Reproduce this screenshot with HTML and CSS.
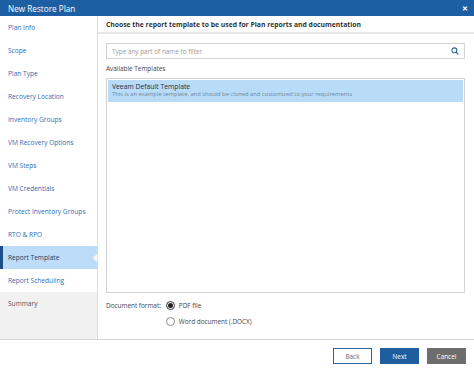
FILE: index.html
```html
<!DOCTYPE html>
<html lang="en">
<head>
<meta charset="UTF-8" />
<title>New Restore Plan</title>
<link rel="stylesheet" href="styles.css">
</head>
<body>
  <div class="dialog">
    <div class="titlebar">
      <span class="title">New Restore Plan</span>
      <span class="close">&#10005;</span>
    </div>
    <div class="main">
      <ul class="steps">
        <li class="step">Plan Info</li>
        <li class="step">Scope</li>
        <li class="step">Plan Type</li>
        <li class="step">Recovery Location</li>
        <li class="step">Inventory Groups</li>
        <li class="step">VM Recovery Options</li>
        <li class="step">VM Steps</li>
        <li class="step">VM Credentials</li>
        <li class="step">Protect Inventory Groups</li>
        <li class="step">RTO &amp; RPO</li>
        <li class="step active">Report Template</li>
        <li class="step">Report Scheduling</li>
        <li class="step pending">Summary</li>
      </ul>
      <div class="content">
        <div class="content-header">Choose the report template to be used for Plan reports and documentation</div>
        <div class="content-body">
          <div class="filter">
            <input type="text" class="filter-input" placeholder="Type any part of name to filter" />
            <svg class="search-icon" width="8" height="8" viewBox="0 0 10 10">
              <circle cx="4.2" cy="4.2" r="3.1" fill="none" stroke="#2a5f96" stroke-width="1.3"/>
              <line x1="6.4" y1="6.4" x2="9.2" y2="9.2" stroke="#2a5f96" stroke-width="1.5"/>
            </svg>
          </div>
          <div class="list-label">Available Templates</div>
          <div class="template-list">
            <div class="template selected">
              <div class="template-name">Veeam Default Template</div>
              <div class="template-desc">This is an example template, and should be cloned and customized to your requirements</div>
            </div>
          </div>
          <div class="format">
            <span class="format-label">Document format:</span>
            <div class="format-options">
              <label class="radio"><span class="radio-dot checked"></span>PDF file</label>
              <label class="radio"><span class="radio-dot"></span>Word document (.DOCX)</label>
            </div>
          </div>
        </div>
      </div>
    </div>
    <div class="footer">
      <button class="btn btn-back">Back</button>
      <button class="btn btn-next">Next</button>
      <button class="btn btn-cancel">Cancel</button>
    </div>
  </div>
</body>
</html>
```

FILE: styles.css
```css
body {
  margin: 0;
  font-family: 'Open Sans', sans-serif;
  background-color: #fff;
}
.dialog {
  width: 474px;
  height: 372px;
  display: flex;
  flex-direction: column;
}
.titlebar {
  height: 16px;
  background-color: #1c5fa3;
  color: #fff;
  display: flex;
  align-items: center;
  justify-content: space-between;
  padding: 0 6px 0 8px;
  font-size: 8.2px;
}
.close {
  font-size: 7px;
  font-weight: 700;
}
.main {
  flex: 1;
  display: flex;
  min-height: 0;
  border-bottom: 1px solid #d6d6d6;
}
.steps {
  list-style: none;
  margin: 0;
  padding: 0;
  width: 97px;
  border-right: 1px solid #dcdcdc;
  display: flex;
  flex-direction: column;
}
.step {
  height: 23px;
  line-height: 23px;
  padding-left: 8px;
  font-size: 6.6px;
  color: #2f6db3;
  position: relative;
}
.step.active {
  background-color: #bcdcf7;
  color: #1d3f66;
  border-left: 3px solid #1c4f87;
  padding-left: 5px;
}
.step.active::after {
  content: '';
  position: absolute;
  right: 0;
  top: 8px;
  border-style: solid;
  border-width: 4px 4px 4px 0;
  border-color: transparent #fff transparent transparent;
}
.step.pending {
  flex: 1;
  background-color: #f1f1f1;
  color: #555;
}
.content {
  flex: 1;
  display: flex;
  flex-direction: column;
}
.content-header {
  height: 16px;
  line-height: 17px;
  padding-left: 8px;
  font-size: 6.8px;
  font-weight: 700;
  color: #333;
  border-bottom: 2px solid #e8e8e8;
}
.content-body {
  flex: 1;
  display: flex;
  flex-direction: column;
  padding: 9px 9px 12px 8px;
}
.filter {
  height: 16px;
  border: 1px solid #d3d3d3;
  display: flex;
  align-items: center;
  padding-right: 5px;
  box-sizing: border-box;
}
.filter-input {
  flex: 1;
  border: none;
  outline: none;
  font-family: 'Open Sans', sans-serif;
  font-size: 6.4px;
  padding: 0 5px;
  background: transparent;
}
.filter-input::placeholder {
  color: #999;
}
.list-label {
  font-size: 6.4px;
  color: #444;
  margin-top: 3px;
  height: 14px;
  line-height: 14px;
}
.template-list {
  flex: 1;
  border: 1px solid #d3d3d3;
  padding: 1px;
  margin-top: 2px;
}
.template.selected {
  background-color: #b8dbf7;
  height: 22px;
  padding: 3px 4px 0;
  box-sizing: border-box;
}
.template-name {
  font-size: 6.8px;
  color: #1d2d3d;
  line-height: 8px;
}
.template-desc {
  font-size: 5.8px;
  color: #6f8799;
  line-height: 7px;
}
.format {
  display: flex;
  margin-top: 7px;
  height: 27px;
  font-size: 6.4px;
  color: #444;
}
.format-label {
  white-space: nowrap;
  margin-right: 5px;
  line-height: 11px;
}
.format-options {
  display: flex;
  flex-direction: column;
  gap: 5px;
}
.radio {
  display: flex;
  align-items: center;
  gap: 4px;
  height: 11px;
}
.radio-dot {
  width: 9px;
  height: 9px;
  border: 1px solid #8a8a8a;
  border-radius: 50%;
  box-sizing: border-box;
  display: flex;
  align-items: center;
  justify-content: center;
}
.radio-dot.checked {
  border-color: #333;
}
.radio-dot.checked::after {
  content: '';
  width: 5px;
  height: 5px;
  border-radius: 50%;
  background-color: #222;
}
.footer {
  height: 32px;
  display: flex;
  align-items: center;
  justify-content: flex-end;
  gap: 8px;
  padding-right: 8px;
}
.btn {
  width: 39px;
  height: 16px;
  font-family: 'Open Sans', sans-serif;
  font-size: 6.4px;
  border: 1px solid transparent;
  padding: 0;
}
.btn-back {
  background-color: #fff;
  border-color: #2d64a0;
  color: #666;
}
.btn-next {
  background-color: #1e5e9e;
  color: #fff;
}
.btn-cancel {
  background-color: #6d6d6d;
  color: #fff;
}
```
